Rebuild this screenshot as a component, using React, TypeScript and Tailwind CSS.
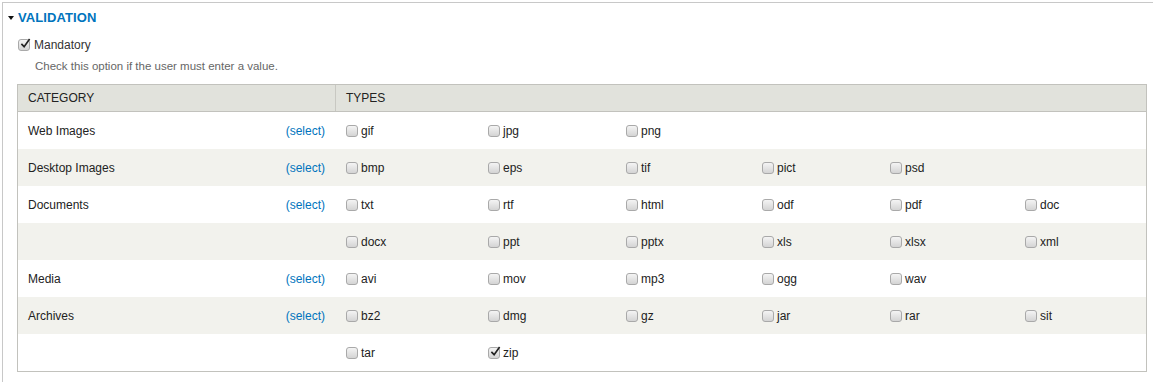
import type { ReactNode } from 'react'

type Row = { category?: string; types: { label: string; checked?: boolean }[] }

const rows: Row[] = [
  { category: 'Web Images', types: [{ label: 'gif' }, { label: 'jpg' }, { label: 'png' }] },
  { category: 'Desktop Images', types: [{ label: 'bmp' }, { label: 'eps' }, { label: 'tif' }, { label: 'pict' }, { label: 'psd' }] },
  { category: 'Documents', types: [{ label: 'txt' }, { label: 'rtf' }, { label: 'html' }, { label: 'odf' }, { label: 'pdf' }, { label: 'doc' }] },
  { types: [{ label: 'docx' }, { label: 'ppt' }, { label: 'pptx' }, { label: 'xls' }, { label: 'xlsx' }, { label: 'xml' }] },
  { category: 'Media', types: [{ label: 'avi' }, { label: 'mov' }, { label: 'mp3' }, { label: 'ogg' }, { label: 'wav' }] },
  { category: 'Archives', types: [{ label: 'bz2' }, { label: 'dmg' }, { label: 'gz' }, { label: 'jar' }, { label: 'rar' }, { label: 'sit' }] },
  { types: [{ label: 'tar' }, { label: 'zip', checked: true }] },
]

function Box({ checked }: { checked?: boolean }) {
  return (
    <span className="relative inline-block w-[12px] h-[12px] rounded-[3px] border border-[#a9a9a9] bg-gradient-to-b from-[#f4f4f4] to-[#d4d4d4] shrink-0">
      {checked && (
        <svg viewBox="0 0 12 12" className="absolute left-[1px] -top-[2px] w-[11px] h-[11px]">
          <path d="M1.5 6.5 L4.5 9.5 L10.5 1" fill="none" stroke="#222" strokeWidth="1.8" />
        </svg>
      )}
    </span>
  )
}

function Check({ label, checked }: { label: string; checked?: boolean }): ReactNode {
  return (
    <span className="flex items-center gap-[3px] text-[12px] text-[#222]">
      <Box checked={checked} />
      <span>{label}</span>
    </span>
  )
}

export default function App() {
  return (
    <div className="w-[1153px] h-[382px] bg-white pt-[2px] pl-[2px] font-['Liberation_Sans',Arial,sans-serif]">
      <fieldset className="border-l border-t border-[#c8c8c8] h-[380px] pl-[3px] pr-[6px]">
        <div className="flex items-center h-[29px]">
          <svg viewBox="0 0 6 4" className="w-[6px] h-[4px] ml-[2px] mr-[4px]">
            <path d="M0 0 L6 0 L3 4 Z" fill="#111" />
          </svg>
          <span className="text-[13px] font-bold text-[#0074bd] tracking-[0.1px]">VALIDATION</span>
        </div>
        <div className="pl-[11px]">
          <div className="flex items-center gap-[4px] h-[26px] pl-[1px] text-[12px] text-[#333]">
            <Box checked />
            <span>Mandatory</span>
          </div>
          <div className="pl-[18px] h-[16px] text-[11.5px] text-[#666] leading-[16px]">
            Check this option if the user must enter a value.
          </div>
          <div className="mt-[10px] border border-[#c2c2bd] w-[1130px]">
            <div className="grid grid-cols-[318px_1fr] h-[27px] bg-[#e1e2dc] border-b border-[#c2c2bd] text-[12px] text-[#222]">
              <div className="flex items-center pl-[10px] border-r border-[#c8c8c2]">CATEGORY</div>
              <div className="flex items-center pl-[10px]">TYPES</div>
            </div>
            {rows.map((r, i) => (
              <div
                key={i}
                className={`grid grid-cols-[318px_1fr] h-[37px] text-[12px] ${i % 2 === 1 ? 'bg-[#f2f2ed]' : 'bg-white'}`}
              >
                <div className="flex items-center justify-between pl-[10px] pr-[11px] text-[#222]">
                  <span>{r.category ?? ''}</span>
                  {r.category && <span className="text-[#0074bd]">(select)</span>}
                </div>
                <div className="grid grid-cols-[142px_138px_136px_128px_135px_1fr] items-center pl-[10px]">
                  {r.types.map(t => (
                    <Check key={t.label} label={t.label} checked={t.checked} />
                  ))}
                </div>
              </div>
            ))}
          </div>
        </div>
      </fieldset>
    </div>
  )
}
